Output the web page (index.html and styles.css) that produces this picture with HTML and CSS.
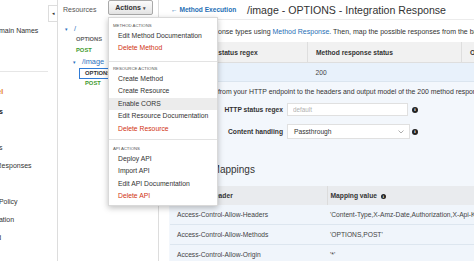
FILE: index.html
```html
<!DOCTYPE html>
<html>
<head>
<meta charset="utf-8">
<title>Integration Response</title>
<link rel="stylesheet" href="styles.css">
</head>
<body>
<div class="app">
  <nav class="nav">
    <ul class="nav-top">
      <li>API Keys</li>
      <li>Custom Domain Names</li>
      <li>Settings</li>
    </ul>
    <hr class="nav-divider">
    <div class="nav-api">API: Travel</div>
    <ul class="nav-sub">
      <li class="active">Resources</li>
      <li>Stages</li>
      <li>Authorizers</li>
      <li>Gateway Responses</li>
      <li>Models</li>
      <li>Resource Policy</li>
      <li>Documentation</li>
      <li>Dashboard</li>
    </ul>
  </nav>

  <div class="gutter"><button class="collapse">&#9666;</button></div>

  <section class="resources">
    <div class="res-head">
      <span class="res-title">Resources</span>
      <div class="actions">
        <button class="actions-btn">Actions <span class="caret">&#9662;</span></button>
        <div class="menu">
          <div class="menu-group g1">
            <div class="menu-head">METHOD ACTIONS</div>
            <div class="menu-item">Edit Method Documentation</div>
            <div class="menu-item danger">Delete Method</div>
          </div>
          <div class="menu-group g2">
            <div class="menu-head">RESOURCE ACTIONS</div>
            <div class="menu-item">Create Method</div>
            <div class="menu-item">Create Resource</div>
            <div class="menu-item hover">Enable CORS</div>
            <div class="menu-item">Edit Resource Documentation</div>
            <div class="menu-item danger">Delete Resource</div>
          </div>
          <div class="menu-group g3">
            <div class="menu-head">API ACTIONS</div>
            <div class="menu-item">Deploy API</div>
            <div class="menu-item">Import API</div>
            <div class="menu-item">Edit API Documentation</div>
            <div class="menu-item danger">Delete API</div>
          </div>
        </div>
      </div>
    </div>

    <div class="tree">
      <div class="node">
        <div class="node-row"><span class="tri">&#9662;</span><span class="res-link">/</span></div>
        <div class="methods">
          <div class="method">OPTIONS</div>
          <div class="method post">POST</div>
        </div>
        <div class="node child">
          <div class="node-row"><span class="tri">&#9662;</span><span class="res-link">/image</span></div>
          <div class="methods">
            <div class="method selected">OPTIONS</div>
            <div class="method post">POST</div>
          </div>
        </div>
      </div>
    </div>
  </section>

  <main class="main">
    <div class="main-head">
      <a class="back">&#8592; Method Execution</a>
      <span class="title">/image - OPTIONS - Integration Response</span>
    </div>
    <p class="desc">First, declare response types using <a class="link">Method Response</a>. Then, map the possible responses from the backend to this method.</p>

    <table class="rtable">
      <colgroup><col class="c-arrow"><col class="c-regex"><col class="c-status"><col class="c-model"></colgroup>
      <thead>
        <tr><th></th><th>HTTP status regex</th><th>Method response status</th><th>Output model</th></tr>
      </thead>
      <tbody>
        <tr class="open"><td>&#9662;</td><td>-</td><td>200</td><td></td></tr>
      </tbody>
    </table>

    <div class="detail">
      <p class="detail-text">Map the output from your HTTP endpoint to the headers and output model of the 200 method response.</p>
      <div class="form">
        <label class="lbl">HTTP status regex</label>
        <input class="field" type="text" placeholder="default">
        <span class="info">i</span>
        <label class="lbl">Content handling</label>
        <div class="select"><span>Passthrough</span><svg class="chev" width="6" height="4" viewBox="0 0 6 4"><path d="M0.5 0.5 L3 3 L5.5 0.5" fill="none" stroke="#999" stroke-width="0.8"/></svg></div>
        <span class="info">i</span>
      </div>

      <h3 class="sub-title">Header Mappings</h3>
      <table class="mtable">
        <colgroup><col class="m-head"><col class="m-val"></colgroup>
        <thead>
          <tr><th>Response header</th><th>Mapping value <span class="info small">i</span></th></tr>
        </thead>
        <tbody>
          <tr><td>Access-Control-Allow-Headers</td><td>'Content-Type,X-Amz-Date,Authorization,X-Api-Key,X-Amz-Security-Token'</td></tr>
          <tr><td>Access-Control-Allow-Methods</td><td>'OPTIONS,POST'</td></tr>
          <tr><td>Access-Control-Allow-Origin</td><td>'*'</td></tr>
        </tbody>
      </table>
    </div>
  </main>
</div>
</body>
</html>
```

FILE: styles.css
```css
html, body {
  margin: 0;
  padding: 0;
  background: #fff;
}
body {
  font-family: "Liberation Sans", Arial, sans-serif;
  color: #333;
}
.app {
  display: flex;
  width: 474px;
  height: 261px;
  overflow: hidden;
}

/* left navigation (scrolled partly out of view) */
.nav {
  width: 48px;
  flex: none;
  overflow: hidden;
  font-size: 7px;
  padding-top: 4px;
  box-sizing: border-box;
}
.nav ul {
  list-style: none;
  margin: 0;
  padding: 0;
}
.nav li {
  line-height: 18px;
  white-space: nowrap;
}
.nav .nav-top {
  margin-left: -36px;
}
.nav-divider {
  border: 0;
  border-top: 1px solid #e6e6e6;
  margin: 13px 0 11px;
}
.nav-api {
  margin-left: -33px;
  line-height: 18px;
  white-space: nowrap;
  font-weight: bold;
  color: #e47911;
}
.nav .nav-sub {
  margin-left: -33px;
  padding-top: 2px;
}
.nav .active {
  font-weight: bold;
  color: #222;
}

.gutter {
  width: 9px;
  flex: none;
}
.collapse {
  display: block;
  margin-top: 5px;
  width: 10px;
  height: 17px;
  padding: 0;
  border: 1px solid #ddd;
  border-right: 0;
  background: #fff;
  color: #333;
  font-size: 5px;
  line-height: 15px;
  position: relative;
  z-index: 3;
}

/* resources panel */
.resources {
  width: 101px;
  flex: none;
  border-left: 1px solid #ddd;
  box-sizing: border-box;
  position: relative;
  z-index: 5;
}
.res-head {
  display: flex;
  align-items: flex-start;
  height: 20px;
  padding: 0 5px;
}
.res-title {
  line-height: 20px;
  font-size: 7px;
  color: #555;
}
.actions {
  margin-left: auto;
  position: relative;
}
.actions-btn {
  display: block;
  width: 45px;
  height: 15px;
  padding: 0;
  border: 1px solid #a9a9a9;
  border-radius: 2px;
  background: linear-gradient(#fbfbfb, #e4e4e4);
  font-family: "Liberation Sans", Arial, sans-serif;
  font-weight: bold;
  font-size: 7px;
  color: #333;
}
.caret {
  font-size: 5px;
  color: #555;
}
.menu {
  position: absolute;
  left: 0;
  top: 17px;
  width: 110px;
  box-sizing: border-box;
  background: #fff;
  border: 1px solid #d9d9d9;
  box-shadow: 0 2px 6px rgba(0, 0, 0, 0.25);
  z-index: 10;
}
.menu-group {
  border-bottom: 1px solid #e3e3e3;
}
.menu-group.g1 { padding: 3.5px 0 6px; }
.menu-group.g2 { padding: 3px 0 3.5px; }
.menu-group.g3 { padding: 5px 0 2px; border-bottom: 0; }
.menu-head {
  font-size: 4.3px;
  line-height: 8px;
  padding-left: 4px;
  color: #555;
  white-space: nowrap;
}
.menu-item {
  font-size: 6.8px;
  line-height: 12.5px;
  padding-left: 9px;
  color: #333;
  white-space: nowrap;
}
.menu-item.danger { color: #d13212; }
.menu-item.hover { background: #ececec; }

.tree {
  padding: 3px 0 0 7px;
}
.node-row {
  display: flex;
  align-items: center;
  height: 11px;
}
.tri {
  width: 9px;
  flex: none;
  font-size: 5px;
  color: #2a72c0;
}
.res-link {
  font-size: 7.4px;
  color: #2a72c0;
}
.methods {
  padding-left: 11px;
}
.method {
  font-size: 5.8px;
  font-weight: bold;
  line-height: 11px;
  color: #666;
}
.method.post { color: #3f9a2e; }
.child { padding-left: 8px; }
.child .methods { padding-left: 12px; }
.method.selected {
  margin: 0.5px 0 0 -6px;
  padding: 0 5px;
  line-height: 9px;
  border: 1px solid #2f7bd6;
  background: #fff;
  color: #333;
}
.child .method.post { line-height: 9px; }

/* main area */
.main {
  flex: 1;
  min-width: 0;
  border-left: 1px solid #ddd;
  overflow: hidden;
}
.main-head {
  display: flex;
  align-items: center;
  height: 20px;
  padding-left: 12px;
  border-bottom: 1px solid #ececec;
  box-sizing: border-box;
  white-space: nowrap;
}
.back {
  width: 76px;
  flex: none;
  font-size: 6.6px;
  font-weight: bold;
  color: #1f6fb5;
}
.title {
  font-size: 10.6px;
  color: #333;
}
.desc {
  margin: 8px 0 0 3px;
  font-size: 7px;
  line-height: 8px;
  white-space: nowrap;
}
.link { color: #1f6fb5; }

.rtable {
  margin: 6px 0 0 7px;
  border-collapse: collapse;
  table-layout: fixed;
  width: 445px;
  font-size: 6.7px;
}
.c-arrow { width: 22px; }
.c-regex { width: 119px; }
.c-status { width: 154px; }
.c-model { width: 150px; }
.rtable th {
  height: 20px;
  padding: 0 0 0 10px;
  background: #f1f1f1;
  border: 1px solid #dedede;
  border-top: 0;
  text-align: left;
  font-weight: bold;
  color: #333;
  white-space: nowrap;
}
.rtable th + th + th { padding-left: 8px; }
.rtable td {
  height: 18px;
  padding: 0 0 0 8px;
  background: #e8f1fb;
  border-bottom: 1px solid #dbe5ef;
  color: #444;
}

.detail {
  margin-left: 10px;
  height: 200px;
  padding: 6px 0 0 1px;
  background: #f3f7fc;
}
.detail-text {
  margin: 0;
  font-size: 6.9px;
  line-height: 8px;
  white-space: nowrap;
}
.form {
  display: grid;
  grid-template-columns: 109px 121px 8px;
  column-gap: 4px;
  row-gap: 8px;
  align-items: center;
  margin: 7px 0 0 4px;
}
.lbl {
  text-align: right;
  font-size: 6.7px;
  font-weight: bold;
  color: #333;
  white-space: nowrap;
}
.field {
  box-sizing: border-box;
  height: 13px;
  width: 121px;
  margin: 0;
  padding: 0 5px;
  border: 1px solid #e0e0e0;
  background: #fff;
  font-family: "Liberation Sans", Arial, sans-serif;
  font-size: 6.3px;
  color: #333;
  outline: none;
}
.field::placeholder { color: #b0b0b0; }
.select {
  box-sizing: border-box;
  height: 15px;
  width: 123px;
  display: flex;
  align-items: center;
  justify-content: space-between;
  padding: 0 5px 0 6px;
  border: 1px solid #e0e0e0;
  background: #fff;
  font-size: 6.7px;
  color: #333;
}
.info {
  display: inline-flex;
  align-items: center;
  justify-content: center;
  width: 6px;
  height: 6px;
  border-radius: 50%;
  background: #222;
  color: #fff;
  font-size: 5px;
  font-weight: bold;
  font-family: "Liberation Serif", serif;
  justify-self: start;
}
.info.small {
  width: 5px;
  height: 5px;
  font-size: 4px;
  vertical-align: -0.5px;
  margin-left: 2px;
}
.sub-title {
  margin: 26px 0 0 6px;
  font-size: 10px;
  line-height: 10px;
  font-weight: normal;
  color: #333;
}
.mtable {
  margin: 11px 0 0 0;
  border-collapse: collapse;
  table-layout: fixed;
  width: 460px;
  font-size: 6.7px;
}
.m-head { width: 157px; }
.m-val { width: 303px; }
.mtable th {
  height: 19px;
  padding: 0 0 0 7px;
  background: #e9ebee;
  border-right: 1px solid #dcdcdc;
  text-align: left;
  font-weight: bold;
  white-space: nowrap;
}
.mtable th + th { padding-left: 3px; }
.mtable td {
  height: 19px;
  padding: 0 0 0 7px;
  border-bottom: 1px solid #dde6ef;
  background: #f0f5fb;
  color: #444;
  white-space: nowrap;
}
.mtable td + td { padding-left: 3px; }
```
